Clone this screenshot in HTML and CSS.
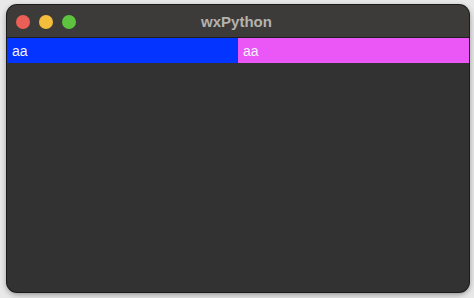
FILE: index.html
```html
<!DOCTYPE html>
<html lang="en">
<head>
    <meta charset="UTF-8">
    <meta name="viewport" content="width=device-width, initial-scale=1.0">
    <title>wxPython</title>
    <link rel="stylesheet" href="styles.css">
</head>
<body>
    <div class="window">
        <div class="titlebar">
            <div class="lights">
                <span class="light red"></span>
                <span class="light yellow"></span>
                <span class="light green"></span>
            </div>
            <div class="title">wxPython</div>
        </div>
        <div class="panels">
            <div class="panel blue">aa</div>
            <div class="panel pink">aa</div>
        </div>
        <div class="content"></div>
    </div>
</body>
</html>
```

FILE: styles.css
```css
body {
    margin: 0;
    height: 298px;
    padding: 5px 5px 6px 7px;
    box-sizing: border-box;
    background: #e9e9e9;
    font-family: "Liberation Sans", Arial, sans-serif;
}

.window {
    width: 462px;
    height: 287px;
    display: flex;
    flex-direction: column;
    border-radius: 10px;
    overflow: hidden;
    background: #323232;
    box-shadow: 0 0 0 1px #1c1c1c, 0 2px 6px rgba(0,0,0,0.45);
}

.titlebar {
    height: 33px;
    flex-shrink: 0;
    display: flex;
    align-items: center;
    position: relative;
    background: #3d3b39;
    border-bottom: 1px solid #1e1e1e;
    box-sizing: border-box;
}

.lights {
    display: flex;
    gap: 9px;
    padding-left: 9px;
    padding-top: 1px;
}

.light {
    width: 14px;
    height: 14px;
    border-radius: 50%;
}

.red { background: #ec5f57; }
.yellow { background: #f4bd3b; }
.green { background: #5ec33e; }

.title {
    position: absolute;
    left: 0;
    right: 0;
    text-align: center;
    color: #b4b2af;
    font-weight: bold;
    font-size: 15px;
    margin-left: -3px;
}

.panels {
    display: flex;
    height: 25px;
    flex-shrink: 0;
}

.panel {
    display: flex;
    align-items: center;
    box-sizing: border-box;
    padding-left: 5px;
    color: #f2f2ff;
    font-size: 14px;
}

.blue {
    width: 231px;
    background: #0434ff;
}

.pink {
    flex: 1;
    background: #ea57f6;
}

.content {
    flex: 1;
}
```
